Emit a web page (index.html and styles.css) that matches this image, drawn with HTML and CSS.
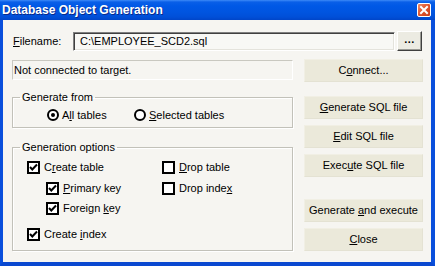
FILE: index.html
```html
<!DOCTYPE html>
<html>
<head>
<meta charset="utf-8">
<link rel="stylesheet" href="styles.css">
</head>
<body>
<div class="window">
  <div class="titlebar">
    <span class="title">Database Object Generation</span>
    <span class="close-btn">
      <svg width="14" height="14" viewBox="0 0 14 14"><path d="M4 4 L10 10 M10 4 L4 10" stroke="#fff" stroke-width="2" stroke-linecap="square"/></svg>
    </span>
  </div>
  <div class="frame">
    <div class="client">
      <div class="file-row">
        <span class="file-label"><u>F</u>ilename:</span>
        <div class="input">C:\EMPLOYEE_SCD2.sql</div>
        <div class="browse">...</div>
      </div>
      <div class="main">
        <div class="left">
          <div class="status">Not connected to target.</div>
          <fieldset class="group g1">
            <legend>Generate from</legend>
            <div class="radio-row">
              <span class="opt opt-all"><span class="radio on"></span><span>A<u>l</u>l tables</span></span>
              <span class="opt"><span class="radio"></span><span><u>S</u>elected tables</span></span>
            </div>
          </fieldset>
          <fieldset class="group g2">
            <legend>Generation options</legend>
            <div class="opt-cols">
              <div class="col col-a">
                <div class="row r1"><span class="cb on"><svg width="9" height="9" viewBox="0 0 9 9"><path d="M1 4 L3.3 6.5 L8 1.5" fill="none" stroke="#000" stroke-width="2"/></svg></span><span>C<u>r</u>eate table</span></div>
                <div class="row r2 indent"><span class="cb on"><svg width="9" height="9" viewBox="0 0 9 9"><path d="M1 4 L3.3 6.5 L8 1.5" fill="none" stroke="#000" stroke-width="2"/></svg></span><span><u>P</u>rimary key</span></div>
                <div class="row r3 indent"><span class="cb on"><svg width="9" height="9" viewBox="0 0 9 9"><path d="M1 4 L3.3 6.5 L8 1.5" fill="none" stroke="#000" stroke-width="2"/></svg></span><span>Foreign <u>k</u>ey</span></div>
                <div class="row r4"><span class="cb on"><svg width="9" height="9" viewBox="0 0 9 9"><path d="M1 4 L3.3 6.5 L8 1.5" fill="none" stroke="#000" stroke-width="2"/></svg></span><span>Create <u>i</u>ndex</span></div>
              </div>
              <div class="col col-b">
                <div class="row r1"><span class="cb"></span><span><u>D</u>rop table</span></div>
                <div class="row r2"><span class="cb"></span><span>Drop inde<u>x</u></span></div>
              </div>
            </div>
          </fieldset>
        </div>
        <div class="right">
          <div class="btn b-connect">C<u>o</u>nnect...</div>
          <div class="btn b-gen"><u>G</u>enerate SQL file</div>
          <div class="btn b-edit"><u>E</u>dit SQL file</div>
          <div class="btn b-exec">Exec<u>u</u>te SQL file</div>
          <div class="btn b-genexec">Generate <u>a</u>nd execute</div>
          <div class="btn b-close"><u>C</u>lose</div>
        </div>
      </div>
    </div>
  </div>
</div>
</body>
</html>
```
FILE: styles.css
```css
* { box-sizing: border-box; }
html, body { margin: 0; padding: 0; }
body {
  width: 435px;
  height: 266px;
  overflow: hidden;
  font-family: "Liberation Sans", Arial, sans-serif;
  font-size: 11px;
  color: #000;
}
u { text-decoration: underline; text-underline-offset: 1px; }

.window {
  width: 435px;
  height: 266px;
  display: flex;
  flex-direction: column;
}

.titlebar {
  height: 20px;
  flex: none;
  display: flex;
  align-items: flex-start;
  justify-content: space-between;
  background: linear-gradient(#3d8af7 0px, #0a5fe8 2px, #0058e6 6px, #0055e0 12px, #004fd8 17px, #0045c8 20px);
}
.title {
  color: #fff;
  font-weight: bold;
  font-size: 12px;
  line-height: 20px;
  padding-left: 2px;
  text-shadow: 1px 1px 0 #0a2a8a;
}
.close-btn {
  width: 14px;
  height: 14px;
  margin: 3px 4px 0 0;
  border: 1px solid #fff;
  border-radius: 2px;
  background: linear-gradient(135deg, #f08a66, #e0522a 50%, #c8401c);
  display: flex;
}
.close-btn svg { margin: -1px; }

.frame {
  flex: 1;
  background: #0a4fdc;
  border-left: 3px solid #0a4fdc;
  border-right: 4px solid #0a4fdc;
  border-bottom: 4px solid #0a48d0;
  display: flex;
}
.client {
  flex: 1;
  background: #f6f5f1;
  padding: 11px 8px 0 9px;
}

.file-row {
  display: flex;
  align-items: center;
  height: 20px;
}
.file-label {
  width: 60px;
  margin-left: 1px;
  flex: none;
}
.input {
  width: 322px;
  height: 19px;
  margin-top: 1px;
  flex: none;
  background: #f8f8f5;
  border-top: 1px solid #808080;
  border-left: 1px solid #808080;
  border-bottom: 1px solid #ffffff;
  border-right: 1px solid #ffffff;
  box-shadow: inset 1px 1px 0 #404040, inset -1px -1px 0 #e4e3dc;
  padding-left: 6px;
  line-height: 17px;
}
.browse {
  width: 25px;
  height: 20px;
  margin-left: 2px;
  flex: none;
  background: #ecebe2;
  border-top: 1px solid #ffffff;
  border-left: 1px solid #ffffff;
  border-bottom: 1px solid #404040;
  border-right: 1px solid #404040;
  box-shadow: inset -1px -1px 0 #9a9a94;
  text-align: center;
  font-weight: bold;
  line-height: 15px;
  letter-spacing: 0.5px;
}

.main {
  display: flex;
  gap: 11px;
  margin-top: 8px;
}
.left {
  width: 281px;
  flex: none;
}
.right {
  width: 119px;
  flex: none;
  display: flex;
  flex-direction: column;
}

.status {
  margin-top: 1px;
  height: 20px;
  border-top: 1px solid #c9c8c0;
  border-left: 1px solid #c9c8c0;
  border-bottom: 1px solid #ffffff;
  border-right: 1px solid #ffffff;
  padding-left: 1px;
  line-height: 18px;
}

.group {
  margin: 0;
  padding: 0;
  border: 1px solid #c2c1b9;
  box-shadow: 1px 1px 0 #ffffff, inset 1px 1px 0 #ffffff;
  min-width: 0;
}
.group legend {
  padding: 0 2px;
  margin-left: 7px;
  line-height: 13px;
}
.g1 {
  margin-top: 11px;
}
.radio-row {
  display: flex;
  align-items: center;
  height: 14px;
  margin: 4px 0 5px 34px;
}
.opt {
  display: flex;
  align-items: center;
  gap: 3px;
}
.opt-all { width: 87px; flex: none; }
.radio {
  width: 12px;
  height: 12px;
  border: 2px solid #000;
  border-radius: 50%;
  background: #fff;
  flex: none;
  display: flex;
  align-items: center;
  justify-content: center;
}
.radio.on::after {
  content: "";
  width: 4px;
  height: 4px;
  border-radius: 50%;
  background: #000;
}

.g2 {
  margin-top: 13px;
}
.opt-cols {
  display: flex;
  padding: 3px 0 6px 14px;
}
.col-a { width: 135px; flex: none; }
.row {
  display: flex;
  align-items: center;
  gap: 4px;
  height: 20px;
}
.row.r2 { margin-top: 1px; }
.row.r4 { margin-top: 6px; }
.row.indent { padding-left: 19px; }
.cb {
  width: 13px;
  height: 13px;
  border: 2px solid #000;
  background: #fff;
  flex: none;
  display: flex;
  align-items: center;
  justify-content: center;
}
.cb svg { display: block; }

.btn {
  height: 23px;
  background: #ebe9da;
  border: 1px solid #f1efe4;
  border-right-color: #e4e2d3;
  border-bottom-color: #e4e2d3;
  text-align: center;
  line-height: 21px;
}
.b-gen { margin-top: 14px; }
.b-edit { margin-top: 6px; }
.b-exec { margin-top: 6px; }
.b-genexec { margin-top: 22px; }
.b-close { margin-top: 6px; }
```
